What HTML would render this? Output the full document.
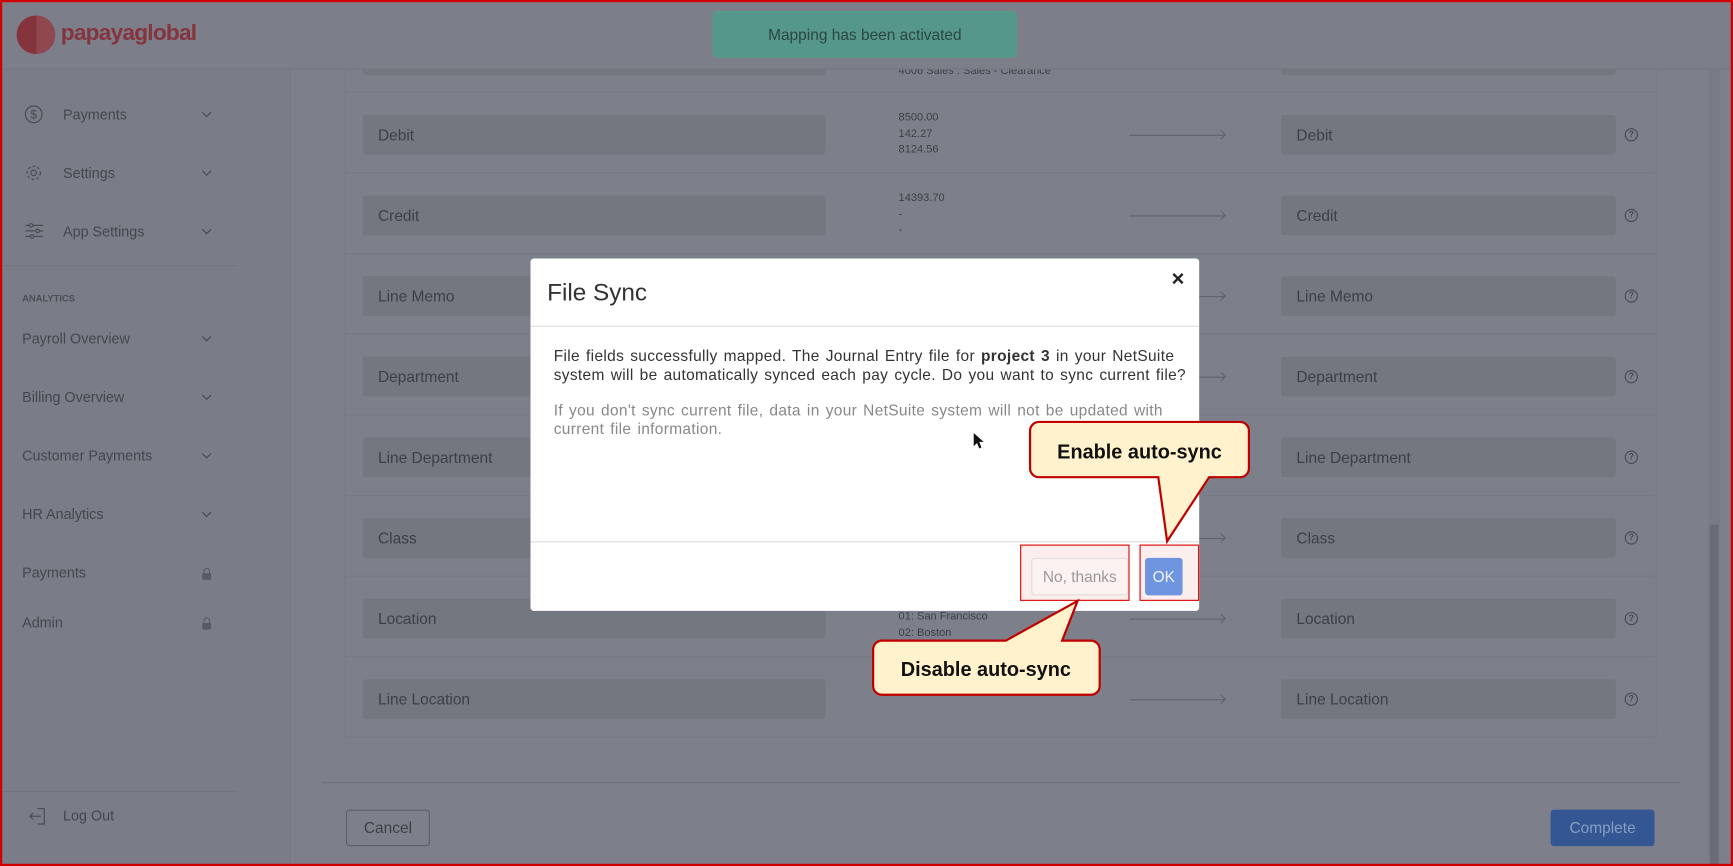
<!DOCTYPE html>
<html><head><meta charset="utf-8"><style>
html,body{margin:0;padding:0;width:1733px;height:866px;overflow:hidden;background:#7d808a;font-family:"Liberation Sans",sans-serif}
#w{position:absolute;left:0;top:0;width:1568px;height:784px;transform:scale(1.10523,1.10459);transform-origin:0 0;background:#7d808a}
.a{position:absolute}
.side{left:0;top:62px;width:262px;height:722px;background:#7a7d87;border-right:1px solid #767983}
.hdr{left:0;top:0;width:1568px;height:62px;background:#7c7f89;border-bottom:1px solid #74777f;z-index:2}
.si{position:absolute;font-size:13px;color:#43464e}
.chev{position:absolute;left:184px;width:5px;height:5px;border-right:1.3px solid #454850;border-bottom:1.3px solid #454850;transform:rotate(45deg)}
.lock{position:absolute;left:183px;width:8px;height:6px;background:#585b64;border-radius:1px}
.lock:before{content:"";position:absolute;left:1px;top:-5px;width:4px;height:5px;border:1.3px solid #585b64;border-bottom:none;border-radius:3px 3px 0 0}
.row{position:absolute;left:312px;width:1185px;height:72px;border-bottom:1px solid #767983}
.inp{position:absolute;height:36px;background:#74777f;border-radius:3px;font-size:14px;color:#3c3f46;line-height:36px;padding-left:14px;box-sizing:border-box}
.mid{position:absolute;left:501px;font-size:10px;color:#3c3f46;line-height:14.5px}
.arr{position:absolute;left:710px;width:86px;height:1px;background:#5f626b}
.arr:after{content:"";position:absolute;right:0;top:-3px;width:5px;height:5px;border-right:1px solid #5f626b;border-top:1px solid #5f626b;transform:rotate(45deg)}
.q{position:absolute;left:1158px;width:10px;height:10px;border:1.2px solid #474a52;border-radius:50%;font-size:8px;line-height:10px;text-align:center;color:#474a52;font-weight:bold}
.modal{left:480px;top:234px;width:605px;height:319px;background:#fff;border-radius:3px}
.t{white-space:nowrap;letter-spacing:0.3px;word-spacing:1.3px}
</style></head><body><div id="w">
<div class="a hdr">
<div class="a" style="left:15px;top:14px;width:35px;height:35px;border-radius:50%;background:#85343e;overflow:hidden"><div style="position:absolute;left:18px;top:0;width:17px;height:35px;background:#904850"></div></div>
<div class="a" style="left:55px;top:18px;font-size:20.5px;font-weight:bold;color:#85343e;letter-spacing:-0.7px">papayaglobal</div>
<div class="a" style="left:645px;top:10px;width:275px;height:42px;background:#55978a;border:1px solid #50a084;border-radius:4px;box-sizing:border-box;text-align:center;line-height:40px;font-size:14px;color:#2b4742">Mapping has been activated</div>
</div>
<div class="a side"></div>
<svg class="a" style="left:22px;top:95px" width="17" height="17" viewBox="0 0 17 17"><circle cx="8.5" cy="8.5" r="7.5" fill="none" stroke="#4a4d55" stroke-width="1.1"/><text x="8.5" y="12.5" font-size="11" text-anchor="middle" fill="#4a4d55" font-family="Liberation Sans">$</text></svg>
<div class="si" style="left:57px;top:96px">Payments</div><div class="chev" style="top:99px"></div>
<svg class="a" style="left:22px;top:148px" width="17" height="17" viewBox="0 0 17 17"><circle cx="8.5" cy="8.5" r="2.5" fill="none" stroke="#4a4d55" stroke-width="1.1"/><circle cx="8.5" cy="8.5" r="6" fill="none" stroke="#4a4d55" stroke-width="1.1" stroke-dasharray="2.5 2"/></svg>
<div class="si" style="left:57px;top:149px">Settings</div><div class="chev" style="top:152px"></div>
<svg class="a" style="left:22px;top:201px" width="18" height="16" viewBox="0 0 18 16"><g stroke="#4a4d55" stroke-width="1.1" fill="none"><line x1="1" y1="3" x2="17" y2="3"/><line x1="1" y1="8" x2="17" y2="8"/><line x1="1" y1="13" x2="17" y2="13"/><circle cx="6" cy="3" r="1.6" fill="#7a7d87"/><circle cx="12" cy="8" r="1.6" fill="#7a7d87"/><circle cx="7" cy="13" r="1.6" fill="#7a7d87"/></g></svg>
<div class="si" style="left:57px;top:202px">App Settings</div><div class="chev" style="top:205px"></div>
<div class="a" style="left:0;top:240px;width:215px;height:1px;background:#72757f"></div>
<div class="si" style="left:20px;top:265px;font-size:8.5px;font-weight:bold;color:#4a4d55">ANALYTICS</div>
<div class="si" style="left:20px;top:299px">Payroll Overview</div><div class="chev" style="top:302px"></div>
<div class="si" style="left:20px;top:352px">Billing Overview</div><div class="chev" style="top:355px"></div>
<div class="si" style="left:20px;top:405px">Customer Payments</div><div class="chev" style="top:408px"></div>
<div class="si" style="left:20px;top:458px">HR Analytics</div><div class="chev" style="top:461px"></div>
<div class="si" style="left:20px;top:511px">Payments</div><div class="lock" style="top:519px"></div>
<div class="si" style="left:20px;top:556px">Admin</div><div class="lock" style="top:564px"></div>
<div class="a" style="left:0;top:716px;width:215px;height:1px;background:#72757f"></div>
<svg class="a" style="left:25px;top:730px" width="20" height="18" viewBox="0 0 20 18"><g stroke="#4a4d55" stroke-width="1.1" fill="none"><path d="M9 2h6v14H9"/><path d="M12 9H2M5 6L2 9l3 3"/></g></svg>
<div class="si" style="left:57px;top:731px">Log Out</div>
<div class="a" style="left:312px;top:62px;width:1185px;height:603px;border-left:1px solid #777a84;border-right:1px solid #777a84"></div>
<div class="inp" style="left:328px;top:40px;width:419px;height:28px"></div>
<div class="inp" style="left:1159px;top:40px;width:303px;height:28px"></div>
<div class="mid" style="left:813px;top:58px">4006 Sales : Sales - Clearance</div>
<div class="a" style="left:312px;top:83px;width:1185px;height:1px;background:#767983"></div>

<div class="row" style="top:84px"><div class="inp" style="left:16px;top:20px;width:419px">Debit</div><div class="mid" style="top:16px">8500.00<br>142.27<br>8124.56</div><div class="arr" style="top:38px"></div><div class="inp" style="left:847px;top:20px;width:303px">Debit</div><div class="q" style="top:32px">?</div></div>
<div class="row" style="top:157px"><div class="inp" style="left:16px;top:20px;width:419px">Credit</div><div class="mid" style="top:16px">14393.70<br>-<br>-</div><div class="arr" style="top:38px"></div><div class="inp" style="left:847px;top:20px;width:303px">Credit</div><div class="q" style="top:32px">?</div></div>
<div class="row" style="top:230px"><div class="inp" style="left:16px;top:20px;width:419px">Line Memo</div><div class="arr" style="top:38px"></div><div class="inp" style="left:847px;top:20px;width:303px">Line Memo</div><div class="q" style="top:32px">?</div></div>
<div class="row" style="top:303px"><div class="inp" style="left:16px;top:20px;width:419px">Department</div><div class="arr" style="top:38px"></div><div class="inp" style="left:847px;top:20px;width:303px">Department</div><div class="q" style="top:32px">?</div></div>
<div class="row" style="top:376px"><div class="inp" style="left:16px;top:20px;width:419px">Line Department</div><div class="arr" style="top:38px"></div><div class="inp" style="left:847px;top:20px;width:303px">Line Department</div><div class="q" style="top:32px">?</div></div>
<div class="row" style="top:449px"><div class="inp" style="left:16px;top:20px;width:419px">Class</div><div class="arr" style="top:38px"></div><div class="inp" style="left:847px;top:20px;width:303px">Class</div><div class="q" style="top:32px">?</div></div>
<div class="row" style="top:522px"><div class="inp" style="left:16px;top:20px;width:419px">Location</div><div class="mid" style="top:30px">01: San Francisco<br>02: Boston</div><div class="arr" style="top:38px"></div><div class="inp" style="left:847px;top:20px;width:303px">Location</div><div class="q" style="top:32px">?</div></div>
<div class="row" style="top:595px"><div class="inp" style="left:16px;top:20px;width:419px">Line Location</div><div class="arr" style="top:38px"></div><div class="inp" style="left:847px;top:20px;width:303px">Line Location</div><div class="q" style="top:32px">?</div></div>

<div class="a" style="left:292px;top:708px;width:1228px;height:1px;background:#6c6f78"></div>
<div class="a" style="left:313px;top:733px;width:76px;height:33px;border:1px solid #5c5f68;border-radius:3px;box-sizing:border-box;text-align:center;line-height:31px;font-size:14px;color:#3c3f46">Cancel</div>
<div class="a" style="left:1403px;top:733px;width:94px;height:33px;background:#345794;border-radius:3px;text-align:center;line-height:33px;font-size:14px;color:#889dc3">Complete</div>
<div class="a" style="left:1546px;top:62px;width:10px;height:722px;background:#787b85"></div>
<div class="a" style="left:1547px;top:475px;width:8px;height:309px;background:#696c75"></div>

<div class="a modal">
<div class="a" style="left:15px;top:18px;font-size:22px;color:#333">File Sync</div>
<div class="a" style="left:580px;top:8px;font-size:20px;color:#222;font-weight:bold">×</div>
<div class="a" style="left:0;top:61px;width:605px;height:1px;background:#ddd"></div>
<div class="a t" style="left:21px;top:80px;font-size:14px;line-height:17px;color:#333">File fields successfully mapped. The Journal Entry file for <b>project 3</b> in your NetSuite<br>system will be automatically synced each pay cycle. Do you want to sync current file?</div>
<div class="a t" style="left:21px;top:129px;font-size:14px;line-height:17px;color:#888">If you don't sync current file, data in your NetSuite system will not be updated with<br>current file information.</div>
<div class="a" style="left:0;top:256px;width:605px;height:1px;background:#ddd"></div>
</div>
<div class="a" style="left:923px;top:493px;width:99px;height:51px;border:1px solid #d00;background:#fdeeee;box-sizing:border-box"></div>
<div class="a" style="left:1031px;top:493px;width:54px;height:51px;border:1px solid #d00;background:#fdeeee;box-sizing:border-box"></div>
<div class="a" style="left:933px;top:505px;width:88px;height:34px;border:1px solid #ddd;border-radius:3px;box-sizing:border-box;background:#fdf2f2;text-align:center;line-height:32px;font-size:14px;color:#999">No, thanks</div>
<div class="a" style="left:1036px;top:505px;width:34px;height:34px;border-radius:3px;background:#6f95e0;text-align:center;line-height:34px;font-size:14px;color:#eef2fb">OK</div>
<svg class="a" style="left:880px;top:391px" width="10" height="16" viewBox="0 0 10 16"><path d="M1 1V13L4 10L6 15L8 14L6 9H10Z" fill="#111"/></svg>
<svg class="a" style="left:0;top:0" width="1568" height="784">
<path d="M940 382 H1122 a8 8 0 0 1 8 8 V424 a8 8 0 0 1 -8 8 H1094 L1056 490 L1048 432 H940 a8 8 0 0 1 -8 -8 V390 a8 8 0 0 1 8 -8Z" fill="#fff2cc" stroke="#c00000" stroke-width="2"/>
<path d="M798 580 H910 L975 544 L961 580 H987 a8 8 0 0 1 8 8 V621 a8 8 0 0 1 -8 8 H798 a8 8 0 0 1 -8 -8 V588 a8 8 0 0 1 8 -8Z" fill="#fff2cc" stroke="#c00000" stroke-width="2"/>
<text x="1031" y="415" font-size="18" font-weight="bold" text-anchor="middle" fill="#111" font-family="Liberation Sans">Enable auto-sync</text>
<text x="892" y="612" font-size="18" font-weight="bold" text-anchor="middle" fill="#111" font-family="Liberation Sans">Disable auto-sync</text>
</svg>
<div class="a" style="left:0;top:0;width:1568px;height:784px;border:2px solid #d00000;box-sizing:border-box;z-index:3"></div>
</div></body></html>
